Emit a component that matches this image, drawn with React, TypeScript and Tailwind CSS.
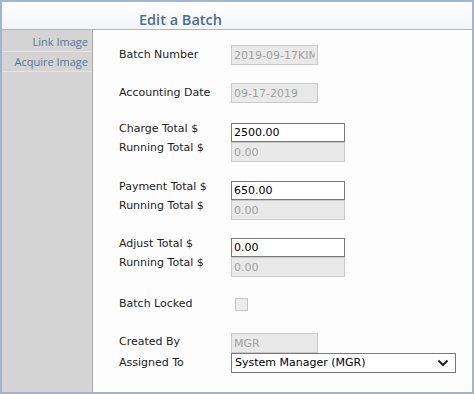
import React from "react";

const label = "w-[112px] shrink-0 text-[11px] text-[#222] leading-none";
const roInput =
  "h-[20px] border border-[#c9c9c9] bg-[#e9e9e9] px-[2px] text-[11px] text-[#a0a0a0] outline-none";
const rwInput =
  "h-[19px] border border-[#7a7a7a] bg-white px-[2px] text-[11px] text-black outline-none";

const Row = ({
  name,
  children,
  className = "",
  offset = "mt-0",
}: {
  name: string;
  children: React.ReactNode;
  className?: string;
  offset?: string;
}) => (
  <div className={`flex items-start ${className}`}>
    <span className={`${label} ${offset}`}>{name}</span>
    {children}
  </div>
);

const EditBatch = () => {
  return (
    <div
      className="flex h-[394px] w-[474px] flex-col border-2 border-[#a3b5cc] bg-[#fdfdfd]"
      style={{ fontFamily: '"DejaVu Sans", Verdana, sans-serif' }}
    >
      <div className="h-[28px] shrink-0 border-b border-[#b4b4b4] bg-gradient-to-b from-white to-[#f2f4f7] pt-[11px]">
        <h1
          className="ml-[137px] text-[14.5px] font-semibold leading-none text-[#4c6d93]"
          style={{ fontFamily: '"Open Sans", sans-serif' }}
        >
          Edit a Batch
        </h1>
      </div>

      <div className="flex flex-1">
        <aside
          className="w-[91px] shrink-0 border-r border-[#a6a6a6] bg-[#d4d4d4] text-[11px] leading-none text-[#58739a]"
          style={{ fontFamily: '"Open Sans", sans-serif' }}
        >
          <div className="flex h-[22px] items-end justify-end border-b border-[#e4e4e4] pb-[4px] pr-[4px]">Link Image</div>
          <div className="flex h-[20px] items-end justify-end border-b border-[#e4e4e4] pb-[4px] pr-[4px]">Acquire Image</div>
        </aside>

        <main className="flex-1 pl-[26px] pt-[15px]">
          <Row name="Batch Number" offset="mt-[4px]">
            <input readOnly value="2019-09-17KIM" className={`${roInput} w-[87px]`} />
          </Row>
          <Row name="Accounting Date" className="mt-[18px]" offset="mt-[4px]">
            <input readOnly value="09-17-2019" className={`${roInput} w-[87px]`} />
          </Row>

          <Row name="Charge Total $" className="mt-[20px]">
            <input readOnly value="2500.00" className={`${rwInput} w-[114px]`} />
          </Row>
          <Row name="Running Total $">
            <input readOnly value="0.00" className={`${roInput} w-[114px]`} />
          </Row>

          <Row name="Payment Total $" className="mt-[19px]">
            <input readOnly value="650.00" className={`${rwInput} w-[114px]`} />
          </Row>
          <Row name="Running Total $">
            <input readOnly value="0.00" className={`${roInput} w-[114px]`} />
          </Row>

          <Row name="Adjust Total $" className="mt-[18px]">
            <input readOnly value="0.00" className={`${rwInput} w-[114px]`} />
          </Row>
          <Row name="Running Total $">
            <input readOnly value="0.00" className={`${roInput} w-[114px]`} />
          </Row>

          <div className="mt-[21px] flex items-start">
            <span className={label}>Batch Locked</span>
            <span className="ml-[4px] block h-[13px] w-[13px] border border-[#c4c4c4] bg-[#ececec]" />
          </div>

          <Row name="Created By" className="mt-[22px]" offset="mt-[3px]">
            <input readOnly value="MGR" className={`${roInput} h-[18px] w-[87px]`} />
          </Row>
          <Row name="Assigned To" offset="mt-[4px]">
            <div className="flex h-[20px] w-[225px] items-center justify-between border border-[#7a7a7a] bg-white pl-[3px] pr-[6px] text-[11px] text-black">
              <span>System Manager (MGR)</span>
              <svg width="12" height="8" viewBox="0 0 12 8" fill="none">
                <path d="M1.5 1.5 6 6 10.5 1.5" stroke="#222" strokeWidth="2" />
              </svg>
            </div>
          </Row>
        </main>
      </div>
    </div>
  );
};

export default function App() {
  return <EditBatch />;
}
